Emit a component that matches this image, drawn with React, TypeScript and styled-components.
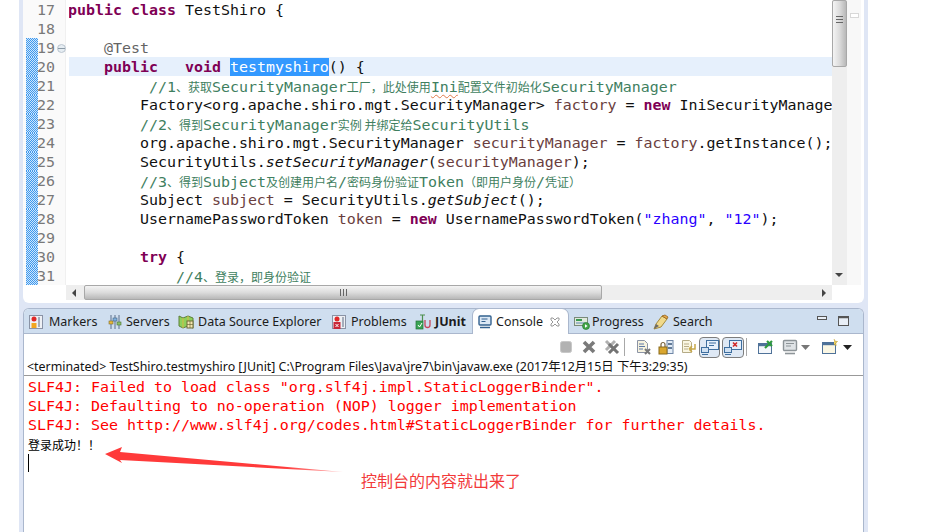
import React, { FC, ReactNode } from "react";
import styled, { createGlobalStyle } from "styled-components";

const GlobalStyle = createGlobalStyle`
  html, body {
    margin: 0;
    padding: 0;
    background: #ffffff;
    overflow: hidden;
  }
`;

const MONO = `"DejaVu Sans Mono", "Noto Sans CJK SC", monospace`;
const UI = `"Noto Sans", "Noto Sans CJK SC", sans-serif`;

const CHECKER = `url("data:image/svg+xml,%3Csvg xmlns='http://www.w3.org/2000/svg' width='2' height='2' shape-rendering='crispEdges'%3E%3Crect width='2' height='2' fill='%23cfe6fb'/%3E%3Crect width='1' height='1' fill='%233d98ee'/%3E%3Crect x='1' y='1' width='1' height='1' fill='%233d98ee'/%3E%3C/svg%3E")`;

const Page = styled.div`
  width: 929px;
  height: 532px;
  padding-left: 19px;
  box-sizing: border-box;
`;

const Workbench = styled.div`
  width: 849px;
  height: 532px;
  box-sizing: border-box;
  padding: 0 4px;
  background: #dfe6f5;
  display: flex;
  flex-direction: column;
  gap: 5px;
`;

const EditorPanel = styled.div`
  height: 303px;
  flex: none;
  background: #ffffff;
  border-radius: 0 0 6px 6px;
  overflow: hidden;
`;

const EditorBody = styled.div`
  height: 285px;
  display: flex;
`;

const Gutter = styled.div`
  width: 42px;
  flex: none;
  margin-right: 3px;
  background: #fafafa;
  border-right: 1px solid #f0f0f0;
`;

const GutterRow = styled.div`
  height: 19px;
  display: flex;
  margin-left: 3px;
  position: relative;
`;

const DiffMark = styled.div<{ $changed?: boolean }>`
  width: 12px;
  flex: none;
  background: ${(p) => (p.$changed ? `${CHECKER} 0 0 / 2px 2px` : "transparent")};
`;

const LineNumber = styled.div`
  margin-left: -1px;
  font: 14.94px/21px ${MONO};
  color: #787878;
`;

const FoldMark = styled.div`
  position: absolute;
  left: 31px;
  top: 6px;
  width: 7px;
  height: 7px;
  border: 1px solid #b9c4cf;
  border-radius: 50%;
  background: linear-gradient(#e6edf2 0 3px, #8b9aa6 3px 4px, #e6edf2 4px);
`;

const CodeArea = styled.div`
  flex: 1;
  min-width: 0;
  overflow: hidden;
`;

const CodeLine = styled.div<{ $current?: boolean }>`
  height: 19px;
  text-indent: -1px;
  font: 14.94px/21px ${MONO};
  color: #101010;
  white-space: pre;
  background: ${(p) => (p.$current ? "#e6f0fc" : "transparent")};
`;

const Kw = styled.span`
  color: #7f0055;
  font-weight: bold;
`;

const Ann = styled.span`
  color: #646464;
`;

const Var = styled.span`
  color: #6a3e3e;
`;

const Str = styled.span`
  color: #2a00ff;
`;

const Comment = styled.span`
  color: #3f7f5f;
`;

const Cjk = styled.span`
  font-family: "Noto Sans CJK SC", sans-serif;
  font-size: 12px;
`;

const Squiggle = styled.span`
  text-decoration: underline wavy #e07a4a 1px;
  text-underline-offset: 2px;
`;

const Selected = styled.span`
  background: #3399ff;
  color: #ffffff;
`;

const Static = styled.span`
  font-style: italic;
`;

const VScroll = styled.div`
  width: 15px;
  flex: none;
  background: #eeeeee;
  position: relative;
`;

const VThumb = styled.div`
  height: 67px;
  box-sizing: border-box;
  border: 1px solid #a8a8a8;
  border-radius: 2px;
  background: linear-gradient(90deg, #f4f4f4, #dcdcdc 50%, #b8b8b8);
  display: flex;
  justify-content: center;
  padding-top: 15px;
`;

const Arrow = styled.div<{ $dir: "down" | "left" | "right" }>`
  position: absolute;
  width: 0;
  height: 0;
  border: 4px solid transparent;
  ${(p) => (p.$dir === "down" ? "border-top-color: #444; border-bottom-width: 0; left: 3px; bottom: 8px;" : "")}
  ${(p) => (p.$dir === "left" ? "border-right-color: #444; border-left-width: 0; left: 6px; top: 4px;" : "")}
  ${(p) => (p.$dir === "right" ? "border-left-color: #444; border-right-width: 0; right: 6px; top: 4px;" : "")}
`;

const Ruler = styled.div`
  width: 14px;
  flex: none;
  background: #f8f8f8;
  position: relative;
`;

const RulerEnd = styled.div`
  width: 3px;
  flex: none;
`;

const RulerMark = styled.div`
  position: absolute;
  left: 3px;
  top: 13px;
  width: 7px;
  height: 3px;
  border: 1px solid #d8d8d8;
  background: #ffffff;
`;

const HScrollRow = styled.div`
  height: 15px;
  margin-left: 43px;
  width: 766px;
  background: #eeeeee;
  position: relative;
  padding-left: 18px;
  box-sizing: border-box;
  display: flex;
`;

const HThumb = styled.div`
  width: 518px;
  box-sizing: border-box;
  border: 1px solid #a8a8a8;
  border-radius: 2px;
  background: linear-gradient(#f4f4f4, #dcdcdc 50%, #b8b8b8);
  display: flex;
  justify-content: center;
  align-items: center;
`;

const ConsolePanel = styled.div`
  flex: 1;
  min-height: 0;
  box-sizing: border-box;
  background: #ffffff;
  border: 1px solid #aab7cd;
  border-bottom: 0;
  border-radius: 6px 6px 0 0;
  display: flex;
  flex-direction: column;
  position: relative;
`;

const TabBar = styled.div`
  height: 25px;
  flex: none;
  box-sizing: border-box;
  background: #cfdeef;
  border-bottom: 1px solid #aab7cd;
  border-radius: 5px 5px 0 0;
  display: flex;
  padding-left: 2px;
  font: 12.5px/24px ${UI};
  color: #1c1c1c;
`;

const Tab = styled.div<{ $width: number; $active?: boolean; $bold?: boolean; $pad?: number; $gap?: number }>`
  width: ${(p) => p.$width}px;
  flex: none;
  box-sizing: border-box;
  height: 25px;
  display: flex;
  align-items: center;
  gap: ${(p) => p.$gap ?? 4}px;
  padding-left: ${(p) => p.$pad ?? 2}px;
  font-weight: ${(p) => (p.$bold ? "bold" : "normal")};
  background: ${(p) => (p.$active ? "#ffffff" : "transparent")};
  border-radius: ${(p) => (p.$active ? "6px 6px 0 0" : "0")};
  ${(p) => (p.$active ? "box-shadow: 0 -1px 0 #aab7cd, 1px 0 0 #aab7cd, -1px 0 0 #aab7cd;" : "")}
`;

const TabClose = styled.span`
  margin-left: 3px;
  display: flex;
`;

const WindowControls = styled.div`
  margin-left: auto;
  display: flex;
  align-items: flex-start;
  gap: 11px;
  padding: 7px 14px 0 0;
`;

const ConsoleToolbar = styled.div`
  height: 24px;
  flex: none;
  box-sizing: border-box;
  padding: 2px 11px 0 0;
  display: flex;
  justify-content: flex-end;
  align-items: center;
`;

const Tool = styled.div<{ $ml?: number }>`
  width: 23px;
  flex: none;
  margin-left: ${(p) => p.$ml ?? 0}px;
  display: flex;
  justify-content: center;
`;

const ToolSep = styled.div<{ $ml: number }>`
  width: 1px;
  height: 18px;
  flex: none;
  margin-left: ${(p) => p.$ml}px;
  background: #a8a8a8;
`;

const PressedTool = styled.div<{ $width: number; $ml: number }>`
  width: ${(p) => p.$width}px;
  flex: none;
  height: 21px;
  margin-left: ${(p) => p.$ml}px;
  box-sizing: border-box;
  border: 1px solid #7d7d7d;
  border-radius: 4px;
  background: #dfe9f5;
  display: flex;
  align-items: center;
  justify-content: center;
`;

const Drop = styled.div<{ $ml?: number }>`
  flex: none;
  margin-left: ${(p) => p.$ml ?? 0}px;
`;

const Status = styled.div`
  height: 18px;
  flex: none;
  box-sizing: border-box;
  padding-left: 3px;
  border-bottom: 1px solid #999999;
  font: 12.4px/18px ${UI};
  color: #111111;
  white-space: pre;
`;

const Output = styled.div`
  flex: 1;
  padding: 2px 0 0 4px;
  font: 14.94px/19px ${MONO};
  white-space: pre;
`;

const ErrLine = styled.div`
  height: 19px;
  color: #ff0000;
`;

const OutLine = styled.div`
  height: 19px;
  color: #000000;
`;

const Caret = styled.div`
  width: 1px;
  height: 18px;
  background: #000000;
`;

const Callout = styled.svg`
  position: absolute;
  left: 81px;
  top: 138px;
`;

const CalloutText = styled.div`
  position: absolute;
  left: 337px;
  top: 160px;
  font: 16px/22px "Noto Sans CJK SC", sans-serif;
  color: #f23a3a;
`;

const Svg: FC<{ w?: number; h?: number; children: ReactNode }> = ({ w = 16, h = 16, children }) => (
  <svg width={w} height={h} viewBox={`0 0 ${w} ${h}`} style={{ flex: "none", display: "block" }}>
    {children}
  </svg>
);

const MarkersIcon = () => (
  <Svg w={17}>
    <rect x="1.5" y="1.5" width="13" height="13" fill="#eef0f4" stroke="#8a93a6" />
    <circle cx="6" cy="5" r="2.5" fill="#e02828" />
    <rect x="3.5" y="9" width="5" height="5" fill="#f2a51e" />
    <path d="M11 3v10" stroke="#a5adbb" strokeWidth="2" />
  </Svg>
);

const ServersIcon = () => (
  <Svg w={14}>
    <path d="M3 1v14M7 1v14M11 1v14" stroke="#5a6f8c" />
    <rect x="1" y="7" width="4" height="3" fill="#e8b93a" stroke="#7a6a30" strokeWidth=".6" />
    <rect x="5" y="4" width="4" height="3" fill="#7fb2e0" stroke="#40607f" strokeWidth=".6" />
    <rect x="9" y="8" width="4" height="3" fill="#8cc06a" stroke="#4a7030" strokeWidth=".6" />
  </Svg>
);

const DataSourceIcon = () => (
  <Svg>
    <path d="M1 2l4 2 5-2 5 2v10l-5-2-5 2-4-2z" fill="#8ed05a" stroke="#5c7f3a" />
    <path d="M5 4v10M10 2v10" stroke="#d8b84a" />
    <rect x="9" y="7" width="6" height="7" fill="#f4e6b0" stroke="#6f6a3a" />
    <path d="M9 10.5h6M12 7v7" stroke="#6f6a3a" strokeWidth=".7" />
  </Svg>
);

const ProblemsIcon = () => (
  <Svg>
    <rect x="1.5" y="1.5" width="13" height="13" fill="#eef0f4" stroke="#8a93a6" />
    <circle cx="6" cy="5" r="2.5" fill="#e02828" />
    <rect x="2.5" y="8" width="7" height="7" fill="#c8283a" />
    <path d="M4.5 10l3 3M7.5 10l-3 3" stroke="#ffffff" />
    <path d="M12 3v10" stroke="#a5adbb" strokeWidth="2" />
  </Svg>
);

const JUnitIcon = () => (
  <Svg>
    <rect x="1" y="7" width="7" height="8" fill="#3aa454" stroke="#24723a" strokeWidth=".7" />
    <path d="M3 11l1.5 2 2.5-4" stroke="#ffffff" fill="none" />
    <path d="M5 1h5M7.5 1v6" stroke="#4f8f4f" strokeWidth="1.2" />
    <path d="M10 6v5a2.5 2.5 0 0 0 5 0V6" stroke="#c8465a" strokeWidth="1.3" fill="none" />
  </Svg>
);

const ConsoleIcon = () => (
  <Svg w={14} h={14}>
    <rect x="1" y="1" width="12" height="9" rx="1" fill="#dbe8f5" stroke="#33618f" strokeWidth="1.4" />
    <path d="M3.5 4h6M3.5 6.5h4" stroke="#33618f" />
    <path d="M2 12.5h10" stroke="#33618f" strokeWidth="1.5" />
  </Svg>
);

const CloseIcon = () => (
  <Svg w={10} h={10}>
    <path d="M1 1h2l2 2 2-2h2v2L7 5l2 2v2H7L5 7 3 9H1V7l2-2-2-2z" fill="#ffffff" stroke="#8c8c8c" strokeWidth=".9" />
  </Svg>
);

const ProgressIcon = () => (
  <Svg>
    <rect x="0.5" y="3.5" width="13" height="8" fill="#dfe9dc" stroke="#7a8a7a" />
    <rect x="2" y="5" width="6" height="2" fill="#3a9a50" />
    <rect x="2" y="8" width="9" height="2" fill="#9fb7c8" />
    <circle cx="12" cy="12" r="3.5" fill="#43a648" stroke="#2d7a33" strokeWidth=".7" />
    <path d="M11 10.2v3.6l2.6-1.8z" fill="#ffffff" />
  </Svg>
);

const SearchIcon = () => (
  <Svg>
    <path d="M1 15l2-5 6-8 5 3-6 8z" fill="#f0d98a" stroke="#a58a3a" />
    <path d="M9 2l5 3 1-2-3-2z" fill="#e6a84a" stroke="#94641e" strokeWidth=".8" />
    <path d="M1 15l2-5 3 2z" fill="#6a6a6a" />
  </Svg>
);

const MinIcon = () => (
  <Svg w={10} h={4}>
    <rect x="0.5" y="0.5" width="9" height="3" fill="#e8eef6" stroke="#555" />
  </Svg>
);

const MaxIcon = () => (
  <Svg w={11} h={10}>
    <rect x="0.5" y="0.5" width="10" height="9" fill="#e8eef6" stroke="#555" />
    <path d="M1 1.5h9" stroke="#555" strokeWidth="1.5" />
  </Svg>
);

const StopIcon = () => (
  <Svg w={12} h={12}>
    <rect x="0.5" y="0.5" width="11" height="11" rx="2" fill="#b2b2b2" stroke="#c8c8c8" />
  </Svg>
);

const RemoveIcon = () => (
  <Svg w={14} h={14}>
    <path d="M2 2l10 10M12 2L2 12" stroke="#7a7a7a" strokeWidth="3.6" />
  </Svg>
);

const RemoveAllIcon = () => (
  <Svg>
    <path d="M2 2l9 9M11 2l-9 9" stroke="#b0b0b0" strokeWidth="3" />
    <path d="M5 5l9 9M14 5l-9 9" stroke="#737373" strokeWidth="3" />
  </Svg>
);

const ClearIcon = () => (
  <Svg>
    <path d="M2.5 1.5h7l3 3v9h-10z" fill="#f6f2df" stroke="#8b93a5" />
    <path d="M4 5h5M4 7.5h6M4 10h4" stroke="#5d79a5" />
    <path d="M10 10l5 5M15 10l-5 5" stroke="#777" strokeWidth="2" />
  </Svg>
);

const LockIcon = () => (
  <Svg>
    <rect x="9" y="1.5" width="6" height="13" fill="#e4edf7" stroke="#6f86a6" />
    <path d="M10 5h4M10 9h4" stroke="#39567a" strokeWidth="1.5" />
    <rect x="1" y="8" width="8" height="7" fill="#d9a62f" stroke="#8a6a1a" />
    <path d="M3 8V5.5a2 2 0 0 1 4 0V8" stroke="#77603a" fill="none" strokeWidth="1.2" />
  </Svg>
);

const WrapIcon = () => (
  <Svg>
    <path d="M1.5 1.5h7l2 2v10h-9z" fill="#faf6e2" stroke="#b5ab86" />
    <path d="M3 5h5M3 7.5h5M3 10h4" stroke="#b9ad88" />
    <path d="M14 5v5H8M8 10l3-3M8 10l3 3" stroke="#c8a848" strokeWidth="1.5" fill="none" />
  </Svg>
);

const StdoutIcon: FC<{ err?: boolean }> = ({ err }) => (
  <Svg w={18} h={16}>
    <rect x="5.5" y="1.5" width="12" height="9" fill="#e6f0fb" stroke="#3f6f9f" />
    {err ? (
      <path d="M9 3.5l4 4M13 3.5l-4 4" stroke="#d02828" strokeWidth="1.6" />
    ) : (
      <path d="M8 4h7M8 6.5h5" stroke="#3f6f9f" />
    )}
    <rect x="0.5" y="8.5" width="7" height="5" fill="#cfe0f2" stroke="#3f6f9f" />
    <path d="M1 15.5h6" stroke="#3f6f9f" />
  </Svg>
);

const PinIcon = () => (
  <Svg>
    <rect x="0.5" y="4.5" width="13" height="10" fill="#f4f7fb" stroke="#4f7299" />
    <path d="M1 6h12" stroke="#4f7299" strokeWidth="2.4" />
    <path d="M7 9l7-7M9 2l5 5" stroke="#2f9a3f" strokeWidth="2.2" />
  </Svg>
);

const DisplayIcon = () => (
  <Svg>
    <rect x="1.5" y="1.5" width="13" height="10" rx="1" fill="#dfe3e6" stroke="#8d9498" strokeWidth="1.4" />
    <path d="M4 4.5h8M4 7h5" stroke="#8d9498" />
    <path d="M3 14.5h10" stroke="#8d9498" strokeWidth="1.6" />
  </Svg>
);

const NewConsoleIcon = () => (
  <Svg>
    <rect x="0.5" y="3.5" width="13" height="11" fill="#fbf7e4" stroke="#4f7299" />
    <path d="M1 5h12" stroke="#4f7299" strokeWidth="2.4" />
    <path d="M12 0l1 2.2 2.5.3-1.8 1.6.5 2.4-2.2-1.2" fill="#f0d060" stroke="#b8982a" strokeWidth=".6" />
  </Svg>
);

const DropDown: FC<{ dark?: boolean }> = ({ dark }) => (
  <Svg w={9} h={5}>
    <path d="M0 0h9L4.5 5z" fill={dark ? "#222" : "#777"} />
  </Svg>
);

const GripV = () => (
  <Svg w={7} h={7}>
    <path d="M0 .5h7M0 3.5h7M0 6.5h7" stroke="#666" />
  </Svg>
);

const GripH = () => (
  <Svg w={7} h={7}>
    <path d="M.5 0v7M3.5 0v7M6.5 0v7" stroke="#666" />
  </Svg>
);

const lineNumbers = Array.from({ length: 15 }, (_, i) => 17 + i);

const App: FC = () => (
  <Page>
    <GlobalStyle />
    <Workbench>
      <EditorPanel>
        <EditorBody>
          <Gutter>
            {lineNumbers.map((n) => (
              <GutterRow key={n}>
                <DiffMark $changed={n >= 19} />
                <LineNumber>{n}</LineNumber>
                {n === 19 && <FoldMark />}
              </GutterRow>
            ))}
          </Gutter>
          <CodeArea>
            <CodeLine>
              <Kw>public</Kw> <Kw>class</Kw> TestShiro {"{"}
            </CodeLine>
            <CodeLine />
            <CodeLine>
              {"    "}
              <Ann>@Test</Ann>
            </CodeLine>
            <CodeLine $current>
              {"    "}
              <Kw>public</Kw>
              {"   "}
              <Kw>void</Kw> <Selected>testmyshiro</Selected>() {"{"}
            </CodeLine>
            <CodeLine>
              {"         "}
              <Comment>
                //1<Cjk>、获取</Cjk>SecurityManager<Cjk>工厂，此处使用</Cjk>
                <Squiggle>Ini</Squiggle>
                <Cjk>配置文件初始化</Cjk>SecurityManager
              </Comment>
            </CodeLine>
            <CodeLine>
              {"        "}Factory&lt;org.apache.shiro.mgt.SecurityManager&gt; <Var>factory</Var> = <Kw>new</Kw>{" "}
              IniSecurityManage
            </CodeLine>
            <CodeLine>
              {"        "}
              <Comment>
                //2<Cjk>、得到</Cjk>SecurityManager<Cjk>实例 并绑定给</Cjk>SecurityUtils
              </Comment>
            </CodeLine>
            <CodeLine>
              {"        "}org.apache.shiro.mgt.SecurityManager <Var>securityManager</Var> = <Var>factory</Var>
              .getInstance();
            </CodeLine>
            <CodeLine>
              {"        "}SecurityUtils.<Static>setSecurityManager</Static>(<Var>securityManager</Var>);
            </CodeLine>
            <CodeLine>
              {"        "}
              <Comment>
                //3<Cjk>、得到</Cjk>Subject<Cjk>及创建用户名</Cjk>/<Cjk>密码身份验证</Cjk>Token
                <Cjk>（即用户身份</Cjk>/<Cjk>凭证）</Cjk>
              </Comment>
            </CodeLine>
            <CodeLine>
              {"        "}Subject <Var>subject</Var> = SecurityUtils.<Static>getSubject</Static>();
            </CodeLine>
            <CodeLine>
              {"        "}UsernamePasswordToken <Var>token</Var> = <Kw>new</Kw> UsernamePasswordToken(
              <Str>"zhang"</Str>, <Str>"12"</Str>);
            </CodeLine>
            <CodeLine />
            <CodeLine>
              {"        "}
              <Kw>try</Kw> {"{"}
            </CodeLine>
            <CodeLine>
              {"            "}
              <Comment>
                //4<Cjk>、登录，即身份验证</Cjk>
              </Comment>
            </CodeLine>
          </CodeArea>
          <VScroll>
            <VThumb>
              <GripV />
            </VThumb>
            <Arrow $dir="down" />
          </VScroll>
          <Ruler>
            <RulerMark />
          </Ruler>
          <RulerEnd />
        </EditorBody>
        <HScrollRow>
          <Arrow $dir="left" />
          <HThumb>
            <GripH />
          </HThumb>
          <Arrow $dir="right" />
        </HScrollRow>
      </EditorPanel>
      <ConsolePanel>
        <TabBar>
          <Tab $width={80}>
            <MarkersIcon />
            Markers
          </Tab>
          <Tab $width={70}>
            <ServersIcon />
            Servers
          </Tab>
          <Tab $width={153}>
            <DataSourceIcon />
            Data Source Explorer
          </Tab>
          <Tab $width={84}>
            <ProblemsIcon />
            Problems
          </Tab>
          <Tab $width={60} $bold>
            <JUnitIcon />
            JUnit
          </Tab>
          <Tab $width={95} $active $pad={5}>
            <ConsoleIcon />
            Console
            <TabClose>
              <CloseIcon />
            </TabClose>
          </Tab>
          <Tab $width={79} $pad={6} $gap={2}>
            <ProgressIcon />
            Progress
          </Tab>
          <Tab $width={70} $pad={6}>
            <SearchIcon />
            Search
          </Tab>
          <WindowControls>
            <MinIcon />
            <MaxIcon />
          </WindowControls>
        </TabBar>
        <ConsoleToolbar>
          <Tool>
            <StopIcon />
          </Tool>
          <Tool>
            <RemoveIcon />
          </Tool>
          <Tool>
            <RemoveAllIcon />
          </Tool>
          <ToolSep $ml={1} />
          <Tool $ml={6}>
            <ClearIcon />
          </Tool>
          <Tool>
            <LockIcon />
          </Tool>
          <Tool>
            <WrapIcon />
          </Tool>
          <PressedTool $width={21} $ml={-1}>
            <StdoutIcon />
          </PressedTool>
          <PressedTool $width={22} $ml={2}>
            <StdoutIcon err />
          </PressedTool>
          <ToolSep $ml={2} />
          <Tool $ml={7}>
            <PinIcon />
          </Tool>
          <Tool $ml={1}>
            <DisplayIcon />
          </Tool>
          <Drop>
            <DropDown />
          </Drop>
          <Tool $ml={8}>
            <NewConsoleIcon />
          </Tool>
          <Drop $ml={2}>
            <DropDown dark />
          </Drop>
        </ConsoleToolbar>
        <Status>
          {"<terminated> TestShiro.testmyshiro [JUnit] C:\\Program Files\\Java\\jre7\\bin\\javaw.exe (2017年12月15日 下午3:29:35)"}
        </Status>
        <Output>
          <ErrLine>SLF4J: Failed to load class "org.slf4j.impl.StaticLoggerBinder".</ErrLine>
          <ErrLine>SLF4J: Defaulting to no-operation (NOP) logger implementation</ErrLine>
          <ErrLine>SLF4J: See http://www.slf4j.org/codes.html#StaticLoggerBinder for further details.</ErrLine>
          <OutLine>
            <Cjk>登录成功！！</Cjk>
          </OutLine>
          <Caret />
        </Output>
        <Callout width="240" height="30" viewBox="0 0 240 30">
          <defs>
            <linearGradient id="tail" x1="0" x2="1" y1="0" y2="0">
              <stop offset="0" stopColor="#ff3a3a" />
              <stop offset="0.75" stopColor="#ff3a3a" />
              <stop offset="1" stopColor="#ffb0b0" />
            </linearGradient>
          </defs>
          <polygon points="0,7 17,0 15,5 238,25 15,13 17,16" fill="url(#tail)" />
        </Callout>
        <CalloutText>控制台的内容就出来了</CalloutText>
      </ConsolePanel>
    </Workbench>
  </Page>
);

export default App;
